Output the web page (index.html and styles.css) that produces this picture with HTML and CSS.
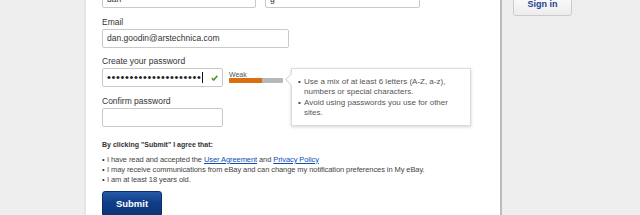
FILE: index.html
```html
<!DOCTYPE html>
<html lang="en">
<head>
<meta charset="utf-8">
<title>Register</title>
<link rel="stylesheet" href="styles.css">
</head>
<body>
<div class="page">
  <div class="gutter"></div>
  <main class="panel">
    <form class="form">
      <div class="name-row">
        <input class="field first" type="text" value="dan">
        <input class="field last" type="text" value="g">
      </div>
      <div class="group">
        <label class="label">Email</label>
        <input class="field email" type="text" value="dan.goodin@arstechnica.com">
      </div>
      <div class="group">
        <label class="label">Create your password</label>
        <div class="pw-row">
          <div class="field pw">
            <span class="dots">•••••••••••••••••••••</span><span class="caret"></span>
            <svg class="check" width="7" height="6" viewBox="0 0 7 6"><path d="M0.8 3.2 L2.7 5 L6.3 0.9" fill="none" stroke="#4f9a22" stroke-width="1.6"/></svg>
          </div>
          <div class="meter">
            <span class="meter-label">Weak</span>
            <div class="bar"><div class="fill" style="width:61%"></div></div>
          </div>
          <div class="tip">
            <ul class="tip-list">
              <li>Use a mix of at least 6 letters (A-Z, a-z), numbers or special characters.</li>
              <li>Avoid using passwords you use for other sites.</li>
            </ul>
          </div>
        </div>
      </div>
      <div class="group">
        <label class="label">Confirm password</label>
        <input class="field confirm" type="password">
      </div>
      <div class="terms">
        <p class="terms-head">By clicking "Submit" I agree that:</p>
        <ul class="terms-list">
          <li>I have read and accepted the <a href="#">User Agreement</a> and <a href="#">Privacy Policy</a></li>
          <li>I may receive communications from eBay and can change my notification preferences in My eBay.</li>
          <li>I am at least 18 years old.</li>
        </ul>
      </div>
      <button class="submit" type="button">Submit</button>
    </form>
  </main>
  <aside class="side">
    <button class="signin" type="button">Sign in</button>
  </aside>
</div>
</body>
</html>
```
FILE: styles.css
```css
html, body {
  margin: 0;
  padding: 0;
}
body {
  background: #efeeee;
  font-family: "Liberation Sans", Arial, sans-serif;
  color: #333;
  width: 640px;
  height: 215px;
  overflow: hidden;
}
.page {
  display: flex;
  height: 215px;
  overflow: hidden;
}
.gutter {
  width: 86px;
  flex: none;
}
.panel {
  width: 398px;
  flex: none;
  background: #fff;
  border-right: 2px solid #bcbcbc;
  box-shadow: -1px 0 2px rgba(0, 0, 0, 0.07);
  padding-left: 16px;
  box-sizing: content-box;
}
.form {
  margin: -11px 0 0 0;
  display: flex;
  flex-direction: column;
  align-items: flex-start;
}
.name-row {
  display: flex;
  gap: 9px;
}
.field {
  box-sizing: border-box;
  height: 19px;
  margin: 0;
  padding: 0 4px;
  border: 1px solid #c9c9c9;
  border-radius: 2px;
  background: #fff;
  font-family: "Liberation Sans", Arial, sans-serif;
  font-size: 8.5px;
  color: #333;
  outline: none;
}
.first { width: 154px; }
.last { width: 155px; }
.email { width: 187px; }
.confirm { width: 121px; }
.group {
  display: flex;
  flex-direction: column;
  align-items: flex-start;
  margin-top: 8.5px;
}
.label {
  font-size: 8.5px;
  line-height: 11.5px;
  margin-bottom: 0.5px;
  color: #333;
}
.pw-row {
  position: relative;
  display: flex;
  align-items: flex-start;
  gap: 6px;
}
.pw {
  width: 121px;
  display: flex;
  align-items: center;
  padding: 0 4px 0 4px;
}
.dots {
  font-size: 11px;
  letter-spacing: 0.65px;
  line-height: 11px;
  color: #222;
}
.caret {
  width: 1px;
  height: 11px;
  background: #111;
  margin-left: 0.5px;
}
.check {
  margin-left: auto;
  margin-right: 0;
}
.meter {
  display: flex;
  flex-direction: column;
  margin-top: 2.5px;
  width: 54px;
}
.meter-label {
  font-size: 7px;
  line-height: 7px;
  color: #555;
}
.bar {
  height: 5px;
  background: #b7b7b7;
  border-radius: 1px;
  overflow: hidden;
}
.fill {
  height: 100%;
  background: #d8700f;
}
.tip {
  position: absolute;
  left: 189px;
  top: 0;
  width: 180px;
  box-sizing: border-box;
  padding: 8px 16px 7px 6px;
  background: #fff;
  border: 1px solid #dcdcdc;
  box-shadow: 0 1px 3px rgba(0, 0, 0, 0.18);
}
.tip::before {
  content: "";
  position: absolute;
  left: -5px;
  top: 6px;
  width: 8px;
  height: 8px;
  background: #fff;
  border-left: 1px solid #d6d6d6;
  border-bottom: 1px solid #d6d6d6;
  transform: rotate(45deg);
}
.tip-list {
  margin: 0;
  padding: 0;
  list-style: none;
  font-size: 8px;
  line-height: 10.3px;
  color: #555;
}
.tip-list li {
  padding-left: 6px;
}
.tip-list li::before {
  content: "•";
  display: inline-block;
  width: 6px;
  margin-left: -6px;
  color: #444;
}
.terms {
  margin-top: 13px;
}
.terms-head {
  margin: 0;
  font-size: 7px;
  line-height: 10px;
  font-weight: bold;
  color: #333;
}
.terms-list {
  margin: 5px 0 0 0;
  padding: 0;
  list-style: none;
  font-size: 7.5px;
  letter-spacing: -0.08px;
  line-height: 10.3px;
  color: #444;
}
.terms-list li::before {
  content: "•";
  display: inline-block;
  width: 5px;
  color: #333;
}
.terms-list a {
  color: #0f4fb4;
  text-decoration: underline;
}
.submit {
  margin-top: 6px;
  width: 60px;
  height: 26px;
  padding: 0 0 2px 0;
  border: 1px solid #0a2c68;
  border-radius: 3px;
  background: linear-gradient(#255aa8, #0f3d86 45%, #0b3475);
  color: #fff;
  font-family: "Liberation Sans", Arial, sans-serif;
  font-size: 9.5px;
  font-weight: bold;
}
.side {
  padding-left: 11px;
}
.signin {
  display: block;
  margin-top: -8px;
  width: 59px;
  height: 24px;
  padding: 0;
  border: 1px solid #cbcbcb;
  border-radius: 3px;
  background: linear-gradient(#ffffff, #ececec);
  color: #1d3e98;
  font-family: "Liberation Sans", Arial, sans-serif;
  font-size: 9px;
  font-weight: bold;
}
```
